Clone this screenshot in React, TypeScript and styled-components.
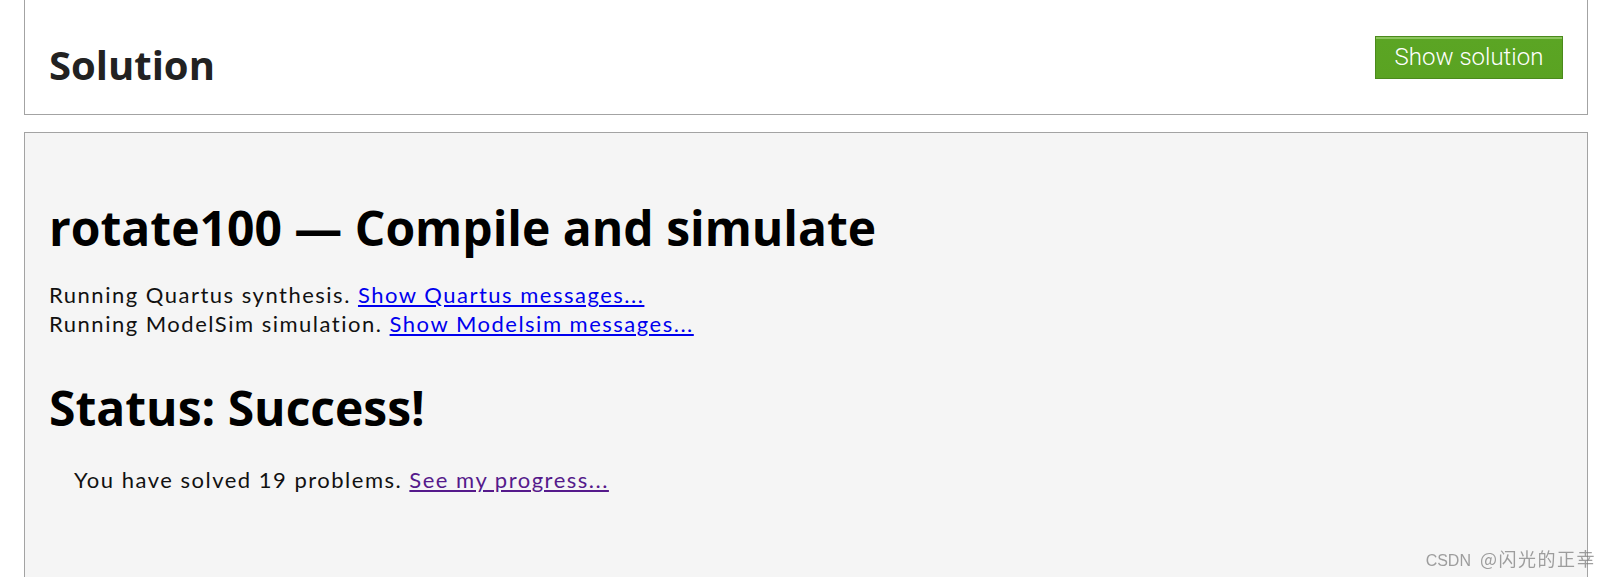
import React from 'react';
import styled, { createGlobalStyle } from 'styled-components';

const GlobalStyle = createGlobalStyle`
  html, body {
    margin: 0;
    padding: 0;
    background: #ffffff;
  }
  body {
    font-family: 'Lato', 'Noto Sans', sans-serif;
    font-size: 22px;
    letter-spacing: 1.5px;
    color: #111111;
    overflow: hidden;
  }
`;

const Page = styled.div`
  padding: 0 22px 0 24px;
  margin-top: -20px;
`;

const Panel = styled.section<{ $shade?: boolean }>`
  border: 1px solid #a3a3a3;
  background: ${({ $shade }) => ($shade ? '#f5f5f5' : '#ffffff')};
  padding: 0 24px;
`;

const SolutionBar = styled(Panel)`
  display: flex;
  justify-content: space-between;
  align-items: flex-start;
  padding-top: 55px;
  padding-bottom: 25px;
`;

const ResultPanel = styled(Panel)`
  margin-top: 17px;
  padding-top: 67px;
  min-height: 600px;
`;

const Heading = styled.h2<{ $size: number; $muted?: boolean }>`
  font-family: 'Open Sans', 'Noto Sans', sans-serif;
  font-weight: 700;
  font-size: ${({ $size }) => $size}px;
  line-height: ${({ $size }) => $size + 8}px;
  letter-spacing: 0;
  margin: 0;
  color: ${({ $muted }) => ($muted ? '#222222' : '#000000')};
`;

const SolutionTitle = styled(Heading)`
  margin-top: 5px;
`;

const StatusTitle = styled(Heading)`
  margin-top: 42px;
`;

const GreenButton = styled.button`
  width: 188px;
  height: 43px;
  padding: 0;
  border: 1px solid #4b8a1c;
  background: linear-gradient(#8cc55e 0, #8cc55e 2px, #5ba524 2px, #5aa322 100%);
  color: #ffffff;
  font-family: 'Roboto', 'Liberation Sans', sans-serif;
  font-weight: 300;
  font-size: 24px;
  line-height: 41px;
  letter-spacing: 0;
  cursor: pointer;
`;

const Messages = styled.p`
  margin: 24px 0 0;
  line-height: 29px;
`;

const Progress = styled.p`
  margin: 29px 0 0 25px;
  line-height: 29px;
`;

const Link = styled.a<{ $visited?: boolean }>`
  color: ${({ $visited }) => ($visited ? '#551a8b' : '#0000ee')};
  text-decoration: underline;
`;

const Watermark = styled.div`
  position: fixed;
  right: 14px;
  bottom: 6px;
  font-family: 'Liberation Sans', 'Noto Sans CJK SC', sans-serif;
  font-size: 16px;
  letter-spacing: 0;
  color: rgba(120, 120, 120, 0.7);
  pointer-events: none;

  span {
    margin-left: 9px;
    font-family: 'Noto Sans CJK SC', sans-serif;
    font-size: 18px;
    letter-spacing: 1.5px;
  }
`;

export default function App() {
  return (
    <>
      <GlobalStyle />
      <Page>
        <SolutionBar>
          <SolutionTitle $size={40} $muted>Solution</SolutionTitle>
          <GreenButton type="button">Show solution</GreenButton>
        </SolutionBar>

        <ResultPanel $shade>
          <Heading $size={48}>rotate100 — Compile and simulate</Heading>
          <Messages>
            Running Quartus synthesis. <Link href="#">Show Quartus messages...</Link>
            <br />
            Running ModelSim simulation. <Link href="#">Show Modelsim messages...</Link>
          </Messages>

          <StatusTitle $size={48}>Status: Success!</StatusTitle>
          <Progress>
            You have solved 19 problems. <Link href="#" $visited>See my progress...</Link>
          </Progress>
        </ResultPanel>
      </Page>
      <Watermark>
        CSDN<span>@闪光的正幸</span>
      </Watermark>
    </>
  );
}
